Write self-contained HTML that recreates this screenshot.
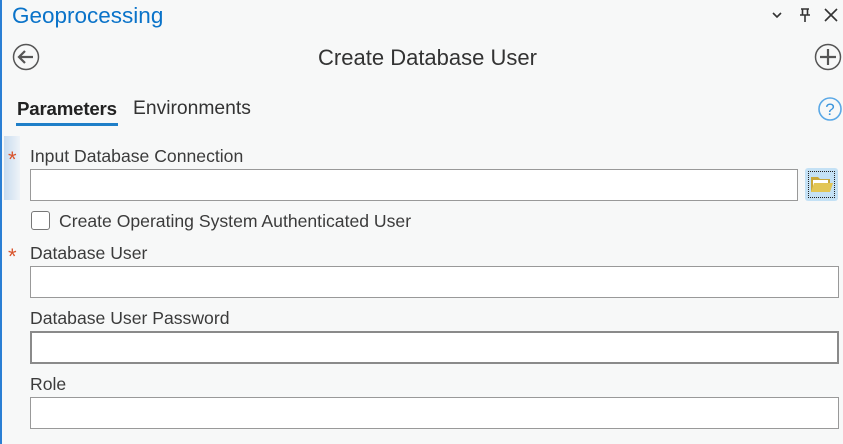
<!DOCTYPE html>
<html><head><style>
*{margin:0;padding:0;box-sizing:border-box}
body{width:843px;height:444px;background:#f7f8f8;font-family:"Liberation Sans",sans-serif;position:relative;overflow:hidden;color:#333}
.a{position:absolute;white-space:nowrap}
.lbl{font-size:17.6px;color:#3b3b3b}
.inp{position:absolute;background:#fff;border:1px solid #999}
.star{color:#d9542c;font-size:22px}
</style></head><body>
<div class="a" style="left:0;top:0;width:2px;height:444px;background:#2a7fd4"></div>
<div class="a" style="left:12px;top:3px;font-size:22.5px;color:#0a73c9">Geoprocessing</div>
<svg class="a" style="left:770px;top:7px" width="70" height="16" viewBox="0 0 70 16">
<path d="M3 6l4 4 4-4" stroke="#333" stroke-width="1.6" fill="none"/>
<path d="M31 2h8M32.5 2v6M37.5 2v6M30 8h10M35 8v7" stroke="#333" stroke-width="1.6" fill="none"/>
<path d="M55 2l12 12M67 2l-12 12" stroke="#333" stroke-width="1.6" fill="none"/>
</svg>
<svg class="a" style="left:12px;top:43px" width="28" height="28" viewBox="0 0 28 28">
<circle cx="14" cy="14" r="12.5" stroke="#555" stroke-width="1.5" fill="none"/>
<path d="M21 14H8M13 8l-6 6 6 6" stroke="#555" stroke-width="2.2" fill="none"/>
</svg>
<div class="a" style="left:0;width:855px;top:45px;text-align:center;font-size:22px;color:#333">Create Database User</div>
<svg class="a" style="left:814px;top:43px" width="28" height="28" viewBox="0 0 28 28">
<circle cx="14" cy="14" r="12.5" stroke="#555" stroke-width="1.5" fill="none"/>
<path d="M14 6v16M6 14h16" stroke="#555" stroke-width="2.2" fill="none"/>
</svg>
<div class="a" style="left:17px;top:98px;font-size:18.7px;color:#222;font-weight:bold;letter-spacing:-0.2px">Parameters</div>
<div class="a" style="left:16px;top:123px;width:102px;height:3px;background:#1f7fc8"></div>
<div class="a" style="left:133px;top:98px;font-size:19.3px;color:#333">Environments</div>
<svg class="a" style="left:817px;top:96px" width="26" height="26" viewBox="0 0 26 26">
<circle cx="13" cy="13" r="11" stroke="#5aa8e6" stroke-width="1.6" fill="none"/>
<text x="13" y="19" text-anchor="middle" font-family="Liberation Sans" font-size="17" fill="#3a94dc">?</text>
</svg>
<div class="a" style="left:4px;top:136px;width:16px;height:64px;background:linear-gradient(to right,#c9dcef,#eef3f8)"></div>
<div class="a star" style="left:8px;top:147px">*</div>
<div class="a lbl" style="left:30px;top:146px">Input Database Connection</div>
<div class="inp" style="left:30px;top:169px;width:768px;height:32px"></div>
<div class="a" style="left:805px;top:168px;width:33px;height:33px;background:#c4e1f5;border-radius:3px"></div>
<div class="a" style="left:808px;top:171px;width:27px;height:27px;border:1.5px dotted #222"></div>
<svg class="a" style="left:810px;top:174px" width="24" height="20" viewBox="0 0 24 20">
<path d="M1 3h7l2 2h10v13H1z" fill="#c9a83a"/>
<path d="M3 6h15v6H3z" fill="#fff"/>
<path d="M1 18l3-9h19l-3 9z" fill="#e2c655"/>
</svg>
<div class="a" style="left:31px;top:211px;width:19px;height:19px;border:1.5px solid #777;border-radius:3px;background:#fff"></div>
<div class="a lbl" style="left:59px;top:211px">Create Operating System Authenticated User</div>
<div class="a star" style="left:8px;top:244px">*</div>
<div class="a lbl" style="left:30px;top:243px">Database User</div>
<div class="inp" style="left:30px;top:266px;width:809px;height:32px"></div>
<div class="a lbl" style="left:30px;top:308px">Database User Password</div>
<div class="inp" style="left:30px;top:331px;width:809px;height:33px;border:2px solid #8a8a8a"></div>
<div class="a lbl" style="left:30px;top:374px">Role</div>
<div class="inp" style="left:30px;top:397px;width:809px;height:32px"></div>
</body></html>
